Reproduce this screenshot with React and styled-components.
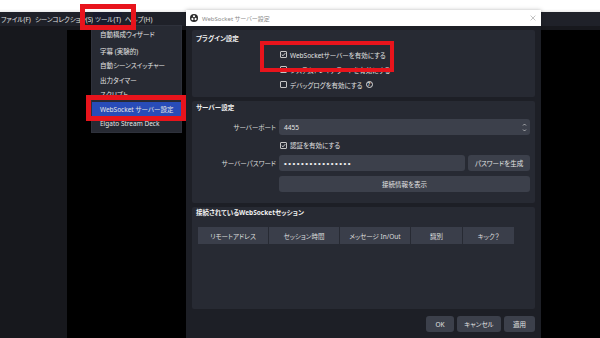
import React from 'react';
import styled, { createGlobalStyle } from 'styled-components';

const GlobalStyle = createGlobalStyle`
  html, body { margin: 0; padding: 0; background: #ffffff; }
  body {
    width: 600px; height: 338px; overflow: hidden;
    font-family: "Noto Sans", "Noto Sans CJK JP", sans-serif;
    font-feature-settings: "palt";
  }
  * { box-sizing: border-box; }
`;

const Page = styled.div`
  position: relative;
  width: 600px;
  height: 338px;
  display: flex;
  flex-direction: column;
  background: #ffffff;
  overflow: hidden;
`;

const TopStrip = styled.div`
  height: 12px;
  background: linear-gradient(#ffffff 0 9px, #ececec 12px);
`;

const MainWindow = styled.div`
  flex: 1;
  display: flex;
  flex-direction: column;
`;

const MenuBar = styled.div`
  height: 14px;
  display: flex;
  align-items: stretch;
  background: #1f2129;
  color: #e2e2e2;
  font-size: 6.5px;
`;

const MenuTitle = styled.div`
  width: ${p => p.$w}px;
  padding-left: ${p => p.$pl}px;
  display: flex;
  align-items: center;
  white-space: nowrap;
  letter-spacing: ${p => p.$ls || 0}px;
  background: ${p => (p.$active ? '#1a1c2e' : 'transparent')};
`;

const Workspace = styled.div`
  flex: 1;
  display: flex;
  background: #17181d;
`;

const SidePanel = styled.div`
  width: 67px;
`;

const Preview = styled.div`
  flex: 1;
  margin-top: 4px;
  background: #000000;
`;

const Dropdown = styled.div`
  position: absolute;
  left: 91px;
  top: 25px;
  width: 91px;
  padding: 1px 0 1.5px;
  background: #272a33;
  border: 1px solid #2e313b;
  display: flex;
  flex-direction: column;
`;

const DropItem = styled.div`
  height: 14.5px;
  padding-left: 8px;
  display: flex;
  align-items: center;
  font-size: 6.5px;
  color: #e4e4e4;
  white-space: nowrap;
  background: ${p => (p.$active ? '#284cb8' : 'transparent')};
`;

const DropSeparator = styled.div`
  height: 2px;
`;

const Dialog = styled.div`
  position: absolute;
  left: 186px;
  top: 10px;
  width: 355px;
  height: 334px;
  display: flex;
  flex-direction: column;
  box-shadow: 0 0 4px rgba(0, 0, 0, 0.25);
`;

const TitleBar = styled.div`
  height: 16px;
  background: #ffffff;
  display: flex;
  align-items: center;
  padding: 0 5px 0 4px;
  gap: 4px;
`;

const TitleText = styled.div`
  flex: 1;
  font-size: 6px;
  color: #8a8a8a;
  white-space: nowrap;
`;

const DialogBody = styled.div`
  flex: 1;
  background: #1d1f26;
  padding: 4px 6px 0;
  display: flex;
  flex-direction: column;
  gap: 4px;
  color: #e2e2e2;
  font-size: 6.5px;
`;

const Group = styled.div`
  height: ${p => p.$h}px;
  background: #272a33;
  border-radius: 2px;
  padding: ${p => p.$pt}px 5px 0 4px;
  display: flex;
  flex-direction: column;
`;

const GroupTitle = styled.div`
  height: 8px;
  line-height: 8px;
  font-weight: 700;
  color: #f0f0f0;
  white-space: nowrap;
`;

const Form = styled.div`
  margin-top: ${p => p.$mt}px;
  display: grid;
  grid-template-columns: 80px 1fr;
  column-gap: 3px;
  row-gap: ${p => p.$rg}px;
  align-items: center;
`;

const Label = styled.div`
  grid-column: 1;
  text-align: right;
  white-space: nowrap;
  color: #dcdcdc;
`;

const CheckRow = styled.div`
  grid-column: 2;
  height: ${p => p.$h}px;
  padding-left: 1px;
  display: flex;
  align-items: center;
  gap: 3px;
  white-space: nowrap;
  color: #e2e2e2;
`;

const Box = styled.span`
  width: 7px;
  height: 7px;
  border: 1px solid #c4c4c4;
  border-radius: 1px;
  display: inline-flex;
  align-items: center;
  justify-content: center;
  flex-shrink: 0;
`;

const HelpIcon = styled.span`
  width: 7px;
  height: 7px;
  margin-left: 0;
  border: 0.8px solid #dcdcdc;
  border-radius: 50%;
  display: inline-flex;
  align-items: center;
  justify-content: center;
  font-size: 5px;
  line-height: 1;
  font-weight: 700;
`;

const Input = styled.div`
  grid-column: ${p => (p.$inRow ? 'auto' : 2)};
  flex: ${p => (p.$inRow ? 1 : 'initial')};
  height: 16px;
  background: #3c404b;
  border-radius: 3px;
  padding: 0 3px 0 5px;
  display: flex;
  align-items: center;
  justify-content: space-between;
  color: #e6e6e6;
`;

const Dots = styled.span`
  font-family: "Liberation Sans", sans-serif;
  font-size: 8px;
  letter-spacing: 1.45px;
  color: #f0f0f0;
`;

const FieldRow = styled.div`
  grid-column: 2;
  display: flex;
  gap: 3px;
`;

const Button = styled.div`
  grid-column: ${p => (p.$full ? 2 : 'auto')};
  width: ${p => (p.$w ? `${p.$w}px` : 'auto')};
  height: 16px;
  background: #3c404b;
  border-radius: 3px;
  display: flex;
  align-items: center;
  justify-content: center;
  color: #e2e2e2;
  white-space: nowrap;
  flex-shrink: 0;
`;

const TableHeader = styled.div`
  margin: 10px 0 0 2px;
  display: flex;
  gap: 1px;
`;

const HeaderCell = styled.div`
  width: ${p => p.$w}px;
  height: 17px;
  background: #3a3e4a;
  display: flex;
  align-items: center;
  justify-content: center;
  white-space: nowrap;
  color: #dedede;
`;

const Footer = styled.div`
  margin-top: 3px;
  display: flex;
  justify-content: flex-end;
  gap: 3px;
`;

const RedBox = styled.div`
  position: absolute;
  left: ${p => p.$x}px;
  top: ${p => p.$y}px;
  width: ${p => p.$w}px;
  height: ${p => p.$h}px;
  border: ${p => p.$t}px solid #e8141c;
`;

const Check = () => (
  <svg width="5" height="5" viewBox="0 0 10 10">
    <path d="M1.5 5.2 L4 7.6 L8.6 2.2" fill="none" stroke="#f2f2f2" strokeWidth="1.6" />
  </svg>
);

const ObsLogo = () => (
  <svg width="8" height="8" viewBox="0 0 16 16">
    <circle cx="8" cy="8" r="8" fill="#2a2a2a" />
    <circle cx="8" cy="4.6" r="2.3" fill="#ffffff" />
    <circle cx="5" cy="10" r="2.3" fill="#ffffff" />
    <circle cx="11" cy="10" r="2.3" fill="#ffffff" />
    <circle cx="8" cy="8" r="1.6" fill="#2a2a2a" />
  </svg>
);

const CloseIcon = () => (
  <svg width="6" height="6" viewBox="0 0 10 10">
    <path d="M1 1 L9 9 M9 1 L1 9" stroke="#9a9a9a" strokeWidth="1" />
  </svg>
);

const Spinner = () => (
  <svg width="5" height="11" viewBox="0 0 10 22">
    <path d="M2 7 L5 4 L8 7" fill="none" stroke="#d8d8d8" strokeWidth="1.4" />
    <path d="M2 15 L5 18 L8 15" fill="none" stroke="#d8d8d8" strokeWidth="1.4" />
  </svg>
);

export default function App() {
  return (
    <Page>
      <GlobalStyle />
      <TopStrip />
      <MainWindow>
        <MenuBar>
          <MenuTitle $w={32} $pl={1}>ファイル(F)</MenuTitle>
          <MenuTitle $w={61} $pl={3} $ls={-0.15}>シーンコレクション(S)</MenuTitle>
          <MenuTitle $w={29} $pl={2} $active>ツール(T)</MenuTitle>
          <MenuTitle $w={40} $pl={3}>ヘルプ(H)</MenuTitle>
        </MenuBar>
        <Workspace>
          <SidePanel />
          <Preview />
        </Workspace>
      </MainWindow>

      <Dropdown>
        <DropItem>自動構成ウィザード</DropItem>
        <DropSeparator />
        <DropItem>字幕 (実験的)</DropItem>
        <DropItem>自動シーンスイッチャー</DropItem>
        <DropItem>出力タイマー</DropItem>
        <DropItem>スクリプト</DropItem>
        <DropItem $active>WebSocket サーバー設定</DropItem>
        <DropItem>Elgato Stream Deck</DropItem>
      </Dropdown>

      <Dialog>
        <TitleBar>
          <ObsLogo />
          <TitleText>WebSocket サーバー設定</TitleText>
          <CloseIcon />
        </TitleBar>
        <DialogBody>
          <Group $h={67} $pt={5}>
            <GroupTitle>プラグイン設定</GroupTitle>
            <Form $mt={4} $rg={0}>
              <CheckRow $h={15}><Box><Check /></Box>WebSocketサーバーを有効にする</CheckRow>
              <CheckRow $h={15}><Box />システムトレイアラートを有効にする</CheckRow>
              <CheckRow $h={15}><Box />デバッグログを有効にする<HelpIcon>?</HelpIcon></CheckRow>
            </Form>
          </Group>

          <Group $h={102} $pt={3}>
            <GroupTitle>サーバー設定</GroupTitle>
            <Form $mt={7} $rg={5}>
              <Label>サーバーポート</Label>
              <Input>4455<Spinner /></Input>
              <CheckRow $h={10}><Box><Check /></Box>認証を有効にする</CheckRow>
              <Label>サーバーパスワード</Label>
              <FieldRow>
                <Input $inRow><Dots>{'\u2022'.repeat(16)}</Dots></Input>
                <Button $w={62}>パスワードを生成</Button>
              </FieldRow>
              <Button $full>接続情報を表示</Button>
            </Form>
          </Group>

          <Group $h={102} $pt={2}>
            <GroupTitle>接続されているWebSocketセッション</GroupTitle>
            <TableHeader>
              <HeaderCell $w={70}>リモートアドレス</HeaderCell>
              <HeaderCell $w={70}>セッション時間</HeaderCell>
              <HeaderCell $w={70}>メッセージ In/Out</HeaderCell>
              <HeaderCell $w={51}>識別</HeaderCell>
              <HeaderCell $w={51}>キック？</HeaderCell>
            </TableHeader>
          </Group>

          <Footer>
            <Button $w={28}>OK</Button>
            <Button $w={44}>キャンセル</Button>
            <Button $w={31}>適用</Button>
          </Footer>
        </DialogBody>
      </Dialog>

      <RedBox $x={80} $y={4} $w={56} $h={26} $t={5} />
      <RedBox $x={86} $y={95} $w={100} $h={26} $t={5} />
      <RedBox $x={260} $y={41} $w={134} $h={31} $t={4} />
    </Page>
  );
}
